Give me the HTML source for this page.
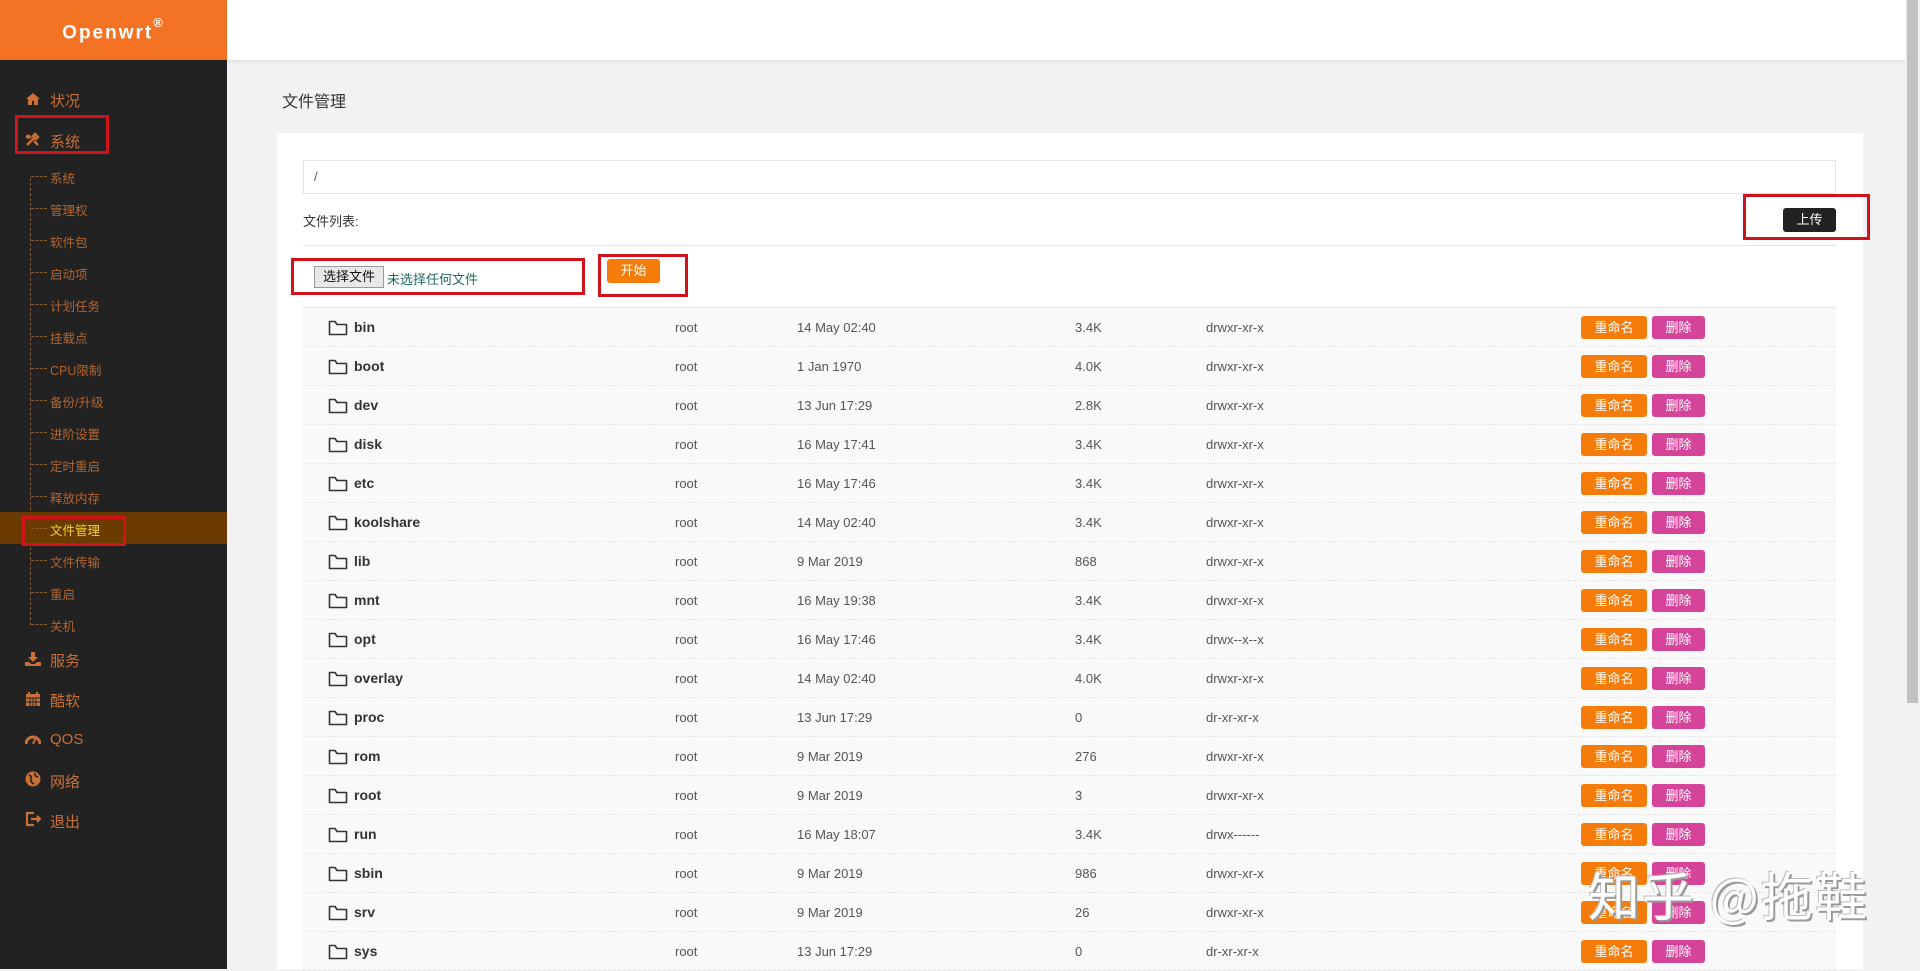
<!DOCTYPE html>
<html><head><meta charset="utf-8">
<style>
*{margin:0;padding:0;box-sizing:border-box}
body{width:1920px;height:969px;overflow:hidden;background:#f0f2f3;font-family:"Liberation Sans","Noto Sans CJK SC",sans-serif;position:relative}
.logo{position:absolute;left:0;top:0;width:227px;height:60px;background:#f37224;color:#fff;font-weight:bold;font-size:19px;letter-spacing:2px;text-align:center;line-height:54px}
.logo sup{font-size:13px;position:relative;top:-4px}
.topbar{position:absolute;left:227px;top:0;width:1678px;height:60px;background:#fff;box-shadow:0 2px 3px rgba(0,0,0,.08)}
.side{position:absolute;left:0;top:60px;width:227px;height:909px;background:#222}
.mi{position:absolute;left:50px;color:#c87038;font-size:15px}
.ic{position:absolute;left:25px;width:16px;height:16px}
.si{position:absolute;left:50px;color:#b5652f;font-size:12.5px}
.dash{position:absolute;left:31px;width:16px;border-top:1px dashed #8a5a30}
.tree{position:absolute;left:30px;top:178px;height:447px;border-left:1px dashed #8a5a30}
.red{position:absolute;border:3px solid #d0121a}
.title{position:absolute;left:282px;top:88px;font-size:16px;color:#333}
.panel{position:absolute;left:277px;top:133px;width:1586px;height:836px;background:#fff}
.path{position:absolute;left:303px;top:160px;width:1533px;height:34px;border:1px solid #e4e4e4;color:#555;font-size:13px;padding:8px 10px}
.lbl{position:absolute;left:303px;top:211px;font-size:13px;color:#333}
.hl{position:absolute;left:303px;top:245px;width:1533px;border-top:1px solid #e5e5e5}
.upl{position:absolute;left:1783px;top:208px;width:53px;height:24px;background:#222;color:#fff;font-size:13px;border-radius:3px;text-align:center;line-height:24px}
.choose{position:absolute;left:314px;top:266px;width:70px;height:22px;background:#e8e8e8;border:1px solid #999;font-size:13px;text-align:center;line-height:20px;color:#111}
.nof{position:absolute;left:387px;top:269px;font-size:13px;color:#1f6b63}
.start{position:absolute;left:607px;top:259px;width:53px;height:24px;background:#f57c0a;color:#fff;font-size:13px;border-radius:3px;text-align:center;line-height:24px}
.tbl{position:absolute;left:303px;top:307px;width:1533px;height:662px;background:#f9f9f9;border-top:1px solid #e8e8e8}
.row{position:absolute;left:0;width:1533px;height:39px;border-bottom:1px dashed #e6e6e6;font-size:13px;color:#555}
.row span{position:absolute;top:12px}
.row .n{left:51px;font-weight:bold;color:#333;font-size:14px;top:11px}
.fold{position:absolute;left:25px;top:11px;width:20px;height:17px}
.b1,.b2{position:absolute;top:8px;height:23px;color:#fff;font-size:13px;text-align:center;line-height:23px;border-radius:3px}
.b1{left:1278px;width:66px;background:#f57c0a}
.b2{left:1349px;width:53px;background:#d6449a}
.scroll{position:absolute;left:1905px;top:0;width:15px;height:969px;background:#f1f1f1}
.thumb{position:absolute;left:1907px;top:0;width:11px;height:703px;background:#c1c1c1}
.wm{position:absolute;left:1588px;top:856px;font-size:52px;color:#fff;text-shadow:2px 2px 0 #9a9a9a,-1px -1px 0 #bbb;letter-spacing:2px;font-family:"Noto Sans CJK SC",sans-serif}
</style></head><body>
<div class="logo">Openwrt<sup>®</sup></div>
<div class="topbar"></div>
<div class="side"></div>
<svg class="ic" style="top:91px" viewBox="0 0 16 16"><path d="M8 2L1 8h2v6h4v-4h2v4h4V8h2z" fill="#c87038"/></svg>
<div class="mi" style="top:90px">状况</div>
<svg class="ic" style="top:132px" viewBox="0 0 16 16"><path d="M2 13l7-7M3 3l3 3M3 3l-1 2 2 1M9 9l4 4M10 2l3 3-2 2-3-3z" stroke="#c87038" stroke-width="2.4" fill="none"/></svg>
<div class="mi" style="top:131px">系统</div>
<div class="red" style="left:15px;top:115px;width:94px;height:39px"></div>
<div class="tree"></div>
<div style="position:absolute;left:0;top:512px;width:227px;height:32px;background:#6a3a00"></div>
<div class="dash" style="top:176px"></div><div class="si" style="top:168px">系统</div>
<div class="dash" style="top:208px"></div><div class="si" style="top:200px">管理权</div>
<div class="dash" style="top:240px"></div><div class="si" style="top:232px">软件包</div>
<div class="dash" style="top:272px"></div><div class="si" style="top:264px">启动项</div>
<div class="dash" style="top:304px"></div><div class="si" style="top:296px">计划任务</div>
<div class="dash" style="top:336px"></div><div class="si" style="top:328px">挂载点</div>
<div class="dash" style="top:368px"></div><div class="si" style="top:360px">CPU限制</div>
<div class="dash" style="top:400px"></div><div class="si" style="top:392px">备份/升级</div>
<div class="dash" style="top:432px"></div><div class="si" style="top:424px">进阶设置</div>
<div class="dash" style="top:464px"></div><div class="si" style="top:456px">定时重启</div>
<div class="dash" style="top:496px"></div><div class="si" style="top:488px">释放内存</div>
<div class="dash" style="top:528px"></div><div class="si" style="top:520px;color:#f5d23a">文件管理</div>
<div class="red" style="left:22px;top:516px;width:104px;height:30px"></div>
<div class="dash" style="top:560px"></div><div class="si" style="top:552px">文件传输</div>
<div class="dash" style="top:592px"></div><div class="si" style="top:584px">重启</div>
<div class="dash" style="top:624px"></div><div class="si" style="top:616px">关机</div>
<svg class="ic" style="top:651px" viewBox="0 0 16 16"><path d="M6 1h4v5h3l-5 5-5-5h3zM0 11h4l2 2h4l2-2h4v4H0z" fill="#c87038"/></svg>
<div class="mi" style="top:650px">服务</div>
<svg class="ic" style="top:691px" viewBox="0 0 16 16"><rect x="1" y="3" width="14" height="12" fill="#c87038"/><rect x="3" y="1" width="2" height="4" fill="#c87038"/><rect x="11" y="1" width="2" height="4" fill="#c87038"/><path d="M1 7h14M5 7v8M8 7v8M11 7v8M1 11h14" stroke="#222" stroke-width="1"/></svg>
<div class="mi" style="top:690px">酷软</div>
<svg class="ic" style="top:731px" viewBox="0 0 16 16"><path d="M1 13A7 7 0 0 1 15 13" stroke="#c87038" stroke-width="3" fill="none"/><path d="M8 13L11 6" stroke="#c87038" stroke-width="2"/></svg>
<div class="mi" style="top:731px">QOS</div>
<svg class="ic" style="top:771px" viewBox="0 0 16 16"><circle cx="8" cy="8" r="7.5" fill="#c87038"/><path d="M4 4q3 1 2 4t3 5M10 2q-1 3 3 4" stroke="#222" stroke-width="1.6" fill="none"/></svg>
<div class="mi" style="top:771px">网络</div>
<svg class="ic" style="top:811px" viewBox="0 0 16 16"><path d="M9 2H2v12h7M6 8h9M12 5l3 3-3 3" stroke="#c87038" stroke-width="2.2" fill="none"/></svg>
<div class="mi" style="top:811px">退出</div>

<div class="title">文件管理</div>
<div class="panel"></div>
<div class="path">/</div>
<div class="lbl">文件列表:</div>
<div class="hl"></div>
<div class="upl">上传</div>
<div class="red" style="left:1743px;top:194px;width:127px;height:46px"></div>
<div class="choose">选择文件</div>
<div class="nof">未选择任何文件</div>
<div class="red" style="left:291px;top:258px;width:294px;height:37px"></div>
<div class="start">开始</div>
<div class="red" style="left:598px;top:254px;width:90px;height:43px"></div>

<div class="tbl">
<svg width="0" height="0" style="position:absolute"><defs><path id="f" d="M1.5 3.5V15.5H18.5V5.5H9L7 2.5H1.5z" fill="none" stroke="#333" stroke-width="1.6" stroke-linejoin="round"/></defs></svg>
<div class="row" style="top:0"><svg class="fold"><use href="#f"/></svg><span class="n">bin</span><span style="left:372px">root</span><span style="left:494px">14 May 02:40</span><span style="left:772px">3.4K</span><span style="left:903px">drwxr-xr-x</span><div class="b1">重命名</div><div class="b2">删除</div></div>
<div class="row" style="top:39px"><svg class="fold"><use href="#f"/></svg><span class="n">boot</span><span style="left:372px">root</span><span style="left:494px">1 Jan 1970</span><span style="left:772px">4.0K</span><span style="left:903px">drwxr-xr-x</span><div class="b1">重命名</div><div class="b2">删除</div></div>
<div class="row" style="top:78px"><svg class="fold"><use href="#f"/></svg><span class="n">dev</span><span style="left:372px">root</span><span style="left:494px">13 Jun 17:29</span><span style="left:772px">2.8K</span><span style="left:903px">drwxr-xr-x</span><div class="b1">重命名</div><div class="b2">删除</div></div>
<div class="row" style="top:117px"><svg class="fold"><use href="#f"/></svg><span class="n">disk</span><span style="left:372px">root</span><span style="left:494px">16 May 17:41</span><span style="left:772px">3.4K</span><span style="left:903px">drwxr-xr-x</span><div class="b1">重命名</div><div class="b2">删除</div></div>
<div class="row" style="top:156px"><svg class="fold"><use href="#f"/></svg><span class="n">etc</span><span style="left:372px">root</span><span style="left:494px">16 May 17:46</span><span style="left:772px">3.4K</span><span style="left:903px">drwxr-xr-x</span><div class="b1">重命名</div><div class="b2">删除</div></div>
<div class="row" style="top:195px"><svg class="fold"><use href="#f"/></svg><span class="n">koolshare</span><span style="left:372px">root</span><span style="left:494px">14 May 02:40</span><span style="left:772px">3.4K</span><span style="left:903px">drwxr-xr-x</span><div class="b1">重命名</div><div class="b2">删除</div></div>
<div class="row" style="top:234px"><svg class="fold"><use href="#f"/></svg><span class="n">lib</span><span style="left:372px">root</span><span style="left:494px">9 Mar 2019</span><span style="left:772px">868</span><span style="left:903px">drwxr-xr-x</span><div class="b1">重命名</div><div class="b2">删除</div></div>
<div class="row" style="top:273px"><svg class="fold"><use href="#f"/></svg><span class="n">mnt</span><span style="left:372px">root</span><span style="left:494px">16 May 19:38</span><span style="left:772px">3.4K</span><span style="left:903px">drwxr-xr-x</span><div class="b1">重命名</div><div class="b2">删除</div></div>
<div class="row" style="top:312px"><svg class="fold"><use href="#f"/></svg><span class="n">opt</span><span style="left:372px">root</span><span style="left:494px">16 May 17:46</span><span style="left:772px">3.4K</span><span style="left:903px">drwx--x--x</span><div class="b1">重命名</div><div class="b2">删除</div></div>
<div class="row" style="top:351px"><svg class="fold"><use href="#f"/></svg><span class="n">overlay</span><span style="left:372px">root</span><span style="left:494px">14 May 02:40</span><span style="left:772px">4.0K</span><span style="left:903px">drwxr-xr-x</span><div class="b1">重命名</div><div class="b2">删除</div></div>
<div class="row" style="top:390px"><svg class="fold"><use href="#f"/></svg><span class="n">proc</span><span style="left:372px">root</span><span style="left:494px">13 Jun 17:29</span><span style="left:772px">0</span><span style="left:903px">dr-xr-xr-x</span><div class="b1">重命名</div><div class="b2">删除</div></div>
<div class="row" style="top:429px"><svg class="fold"><use href="#f"/></svg><span class="n">rom</span><span style="left:372px">root</span><span style="left:494px">9 Mar 2019</span><span style="left:772px">276</span><span style="left:903px">drwxr-xr-x</span><div class="b1">重命名</div><div class="b2">删除</div></div>
<div class="row" style="top:468px"><svg class="fold"><use href="#f"/></svg><span class="n">root</span><span style="left:372px">root</span><span style="left:494px">9 Mar 2019</span><span style="left:772px">3</span><span style="left:903px">drwxr-xr-x</span><div class="b1">重命名</div><div class="b2">删除</div></div>
<div class="row" style="top:507px"><svg class="fold"><use href="#f"/></svg><span class="n">run</span><span style="left:372px">root</span><span style="left:494px">16 May 18:07</span><span style="left:772px">3.4K</span><span style="left:903px">drwx------</span><div class="b1">重命名</div><div class="b2">删除</div></div>
<div class="row" style="top:546px"><svg class="fold"><use href="#f"/></svg><span class="n">sbin</span><span style="left:372px">root</span><span style="left:494px">9 Mar 2019</span><span style="left:772px">986</span><span style="left:903px">drwxr-xr-x</span><div class="b1">重命名</div><div class="b2">删除</div></div>
<div class="row" style="top:585px"><svg class="fold"><use href="#f"/></svg><span class="n">srv</span><span style="left:372px">root</span><span style="left:494px">9 Mar 2019</span><span style="left:772px">26</span><span style="left:903px">drwxr-xr-x</span><div class="b1">重命名</div><div class="b2">删除</div></div>
<div class="row" style="top:624px"><svg class="fold"><use href="#f"/></svg><span class="n">sys</span><span style="left:372px">root</span><span style="left:494px">13 Jun 17:29</span><span style="left:772px">0</span><span style="left:903px">dr-xr-xr-x</span><div class="b1">重命名</div><div class="b2">删除</div></div>
</div>
<div class="wm">知乎 @拖鞋</div>
<div class="scroll"></div><div class="thumb"></div>
</body></html>
